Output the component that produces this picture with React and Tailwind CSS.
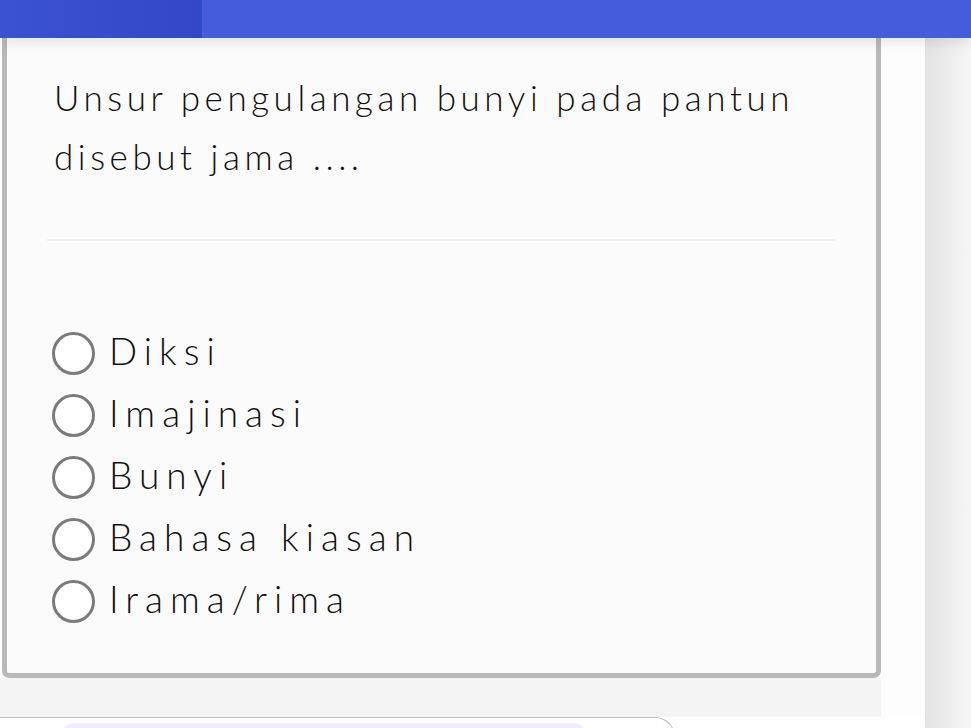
import React from "react";

const options = ["Diksi", "Imajinasi", "Bunyi", "Bahasa kiasan", "Irama/rima"];

function Option({ label }) {
  return (
    <label className="flex items-center h-[62px] cursor-pointer">
      <span className="block w-[43px] h-[43px] rounded-full border-[3px] border-[#7b7b7b] bg-white shrink-0"></span>
      <span className="ml-[14px] -mt-[5px] text-[37px] leading-none tracking-[0.19em] text-[#111]">
        {label}
      </span>
    </label>
  );
}

export default function App() {
  return (
    <div
      className="w-[971px] h-[728px] overflow-hidden bg-white"
      style={{ fontFamily: "Lato, 'Noto Sans', sans-serif", fontWeight: 300 }}
    >
      {/* top bar */}
      <div className="relative z-10 flex h-[38px] bg-[#455ddc] shadow-[0_4px_14px_rgba(0,0,0,0.10)]">
        <div className="w-[202px] h-full bg-gradient-to-r from-[#3b52d2] to-[#3347c8]"></div>
      </div>

      <div className="flex h-[690px]">
        <div className="w-[925px] flex flex-col">
          <div className="flex">
            <div className="w-[881px] flex flex-col">
              <div className="ml-[2px] h-[640px] border-x-[5px] border-b-[5px] border-[#b9b9b9] rounded-b-[7px] bg-[#fbfbfb] px-[40px]">
                <div className="pt-[30px] pl-[7px] pr-[10px] text-[35px] leading-[59px] tracking-[0.13em] text-[#111]">
                  Unsur pengulangan bunyi pada pantun disebut jama ....
                </div>
                <div className="mt-[53px] h-[2px] bg-[#efefef]"></div>
                <div className="mt-[81px] pl-[5px]">
                  {options.map((o) => (
                    <Option key={o} label={o} />
                  ))}
                </div>
              </div>
              <div className="h-[39px] bg-[#f4f4f4]"></div>
            </div>
            <div className="w-[44px] bg-[#fdfdfd]"></div>
          </div>
          <div className="w-[675px] h-[20px] bg-white rounded-tr-[60px] border-t border-r border-[#bdbdbd] pl-[63px] pt-[5px]">
            <div className="w-[522px] h-[20px] bg-[#f1ecff] rounded-t-[10px]"></div>
          </div>
        </div>
        <div className="w-[46px] bg-gradient-to-r from-[#e3e3e3] to-[#f6f6f6]"></div>
      </div>
    </div>
  );
}
